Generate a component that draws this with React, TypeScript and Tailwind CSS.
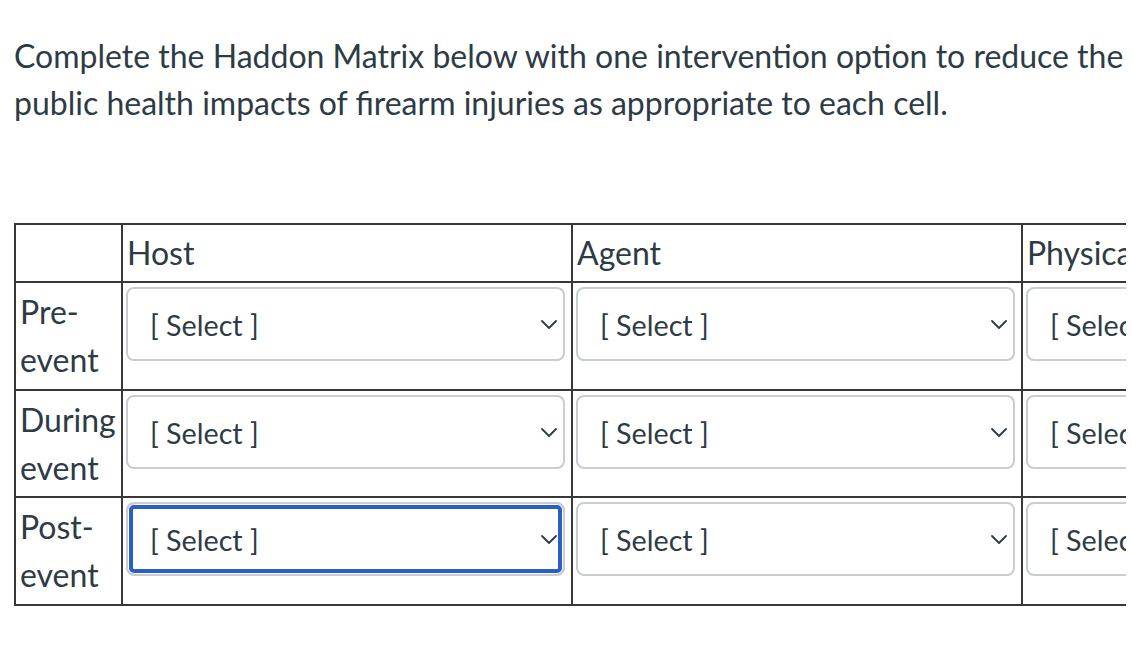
import React from "react";

const rows = [
  { label: ["Pre-", "event"], h: "h-[108px]" },
  { label: ["During", "event"], h: "h-[107px]" },
  { label: ["Post-", "event"], h: "h-[108px]", focused: true },
];

const columns = ["Host", "Agent", "Physical Environment"];

function Chevron() {
  return (
    <svg width="16" height="9" viewBox="0 0 16 9" fill="none" className="shrink-0">
      <polyline points="1,1 8,8 15,1" stroke="#2d3b45" strokeWidth="1.8" strokeLinecap="round" strokeLinejoin="round" />
    </svg>
  );
}

function SelectBox({ focused = false }: { focused?: boolean }) {
  return (
    <div
      className={`flex items-center justify-between w-[439px] h-[74px] rounded-[8px] border-2 border-[#c7cdd1] bg-white pl-[22px] pr-[6px] ${
        focused ? "shadow-[inset_0_0_0_1px_#ffffff,inset_0_0_0_5px_#2b5fc7]" : ""
      }`}
    >
      <span className="text-[28.7px] leading-none whitespace-nowrap pt-[2px]">[ Select ]</span>
      <Chevron />
    </div>
  );
}

export default function App() {
  return (
    <div className="w-[1132px] h-[654px] bg-white">
      <div className="w-[1126px] h-[654px] overflow-hidden font-['Lato',_'Liberation_Sans',_sans-serif] text-[#2d3b45]">
        <div className="pl-[14px] pt-[32px]">
          <p className="text-[32px] leading-[47px]">
            <span className="block whitespace-nowrap">Complete the Haddon Matrix below with one intervention option to reduce the</span>
            <span className="block whitespace-nowrap">public health impacts of firearm injuries as appropriate to each cell.</span>
          </p>

          <div className="mt-[97px] grid grid-cols-[107px_450px_450px_450px] w-max border-l-2 border-t-2 border-[#383838]">
            {/* Header */}
            <div className="h-[58px] border-r-2 border-b-2 border-[#383838]" />
            {columns.map((c) => (
              <div key={c} className="h-[58px] border-r-2 border-b-2 border-[#383838] px-[4px] pt-[4px] text-[32px] leading-[47px] whitespace-nowrap">
                {c}
              </div>
            ))}

            {/* Body */}
            {rows.map((r) => (
              <React.Fragment key={r.label[0]}>
                <div className={`${r.h} border-r-2 border-b-2 border-[#383838] px-[4px] pt-[5px] text-[32px] leading-[48px]`}>
                  <div>{r.label[0]}</div>
                  <div>{r.label[1]}</div>
                </div>
                {columns.map((c, i) => (
                  <div key={c} className={`${r.h} border-r-2 border-b-2 border-[#383838] pl-[3px] pt-[4px]`}>
                    <SelectBox focused={r.focused && i === 0} />
                  </div>
                ))}
              </React.Fragment>
            ))}
          </div>
        </div>
      </div>
    </div>
  );
}
